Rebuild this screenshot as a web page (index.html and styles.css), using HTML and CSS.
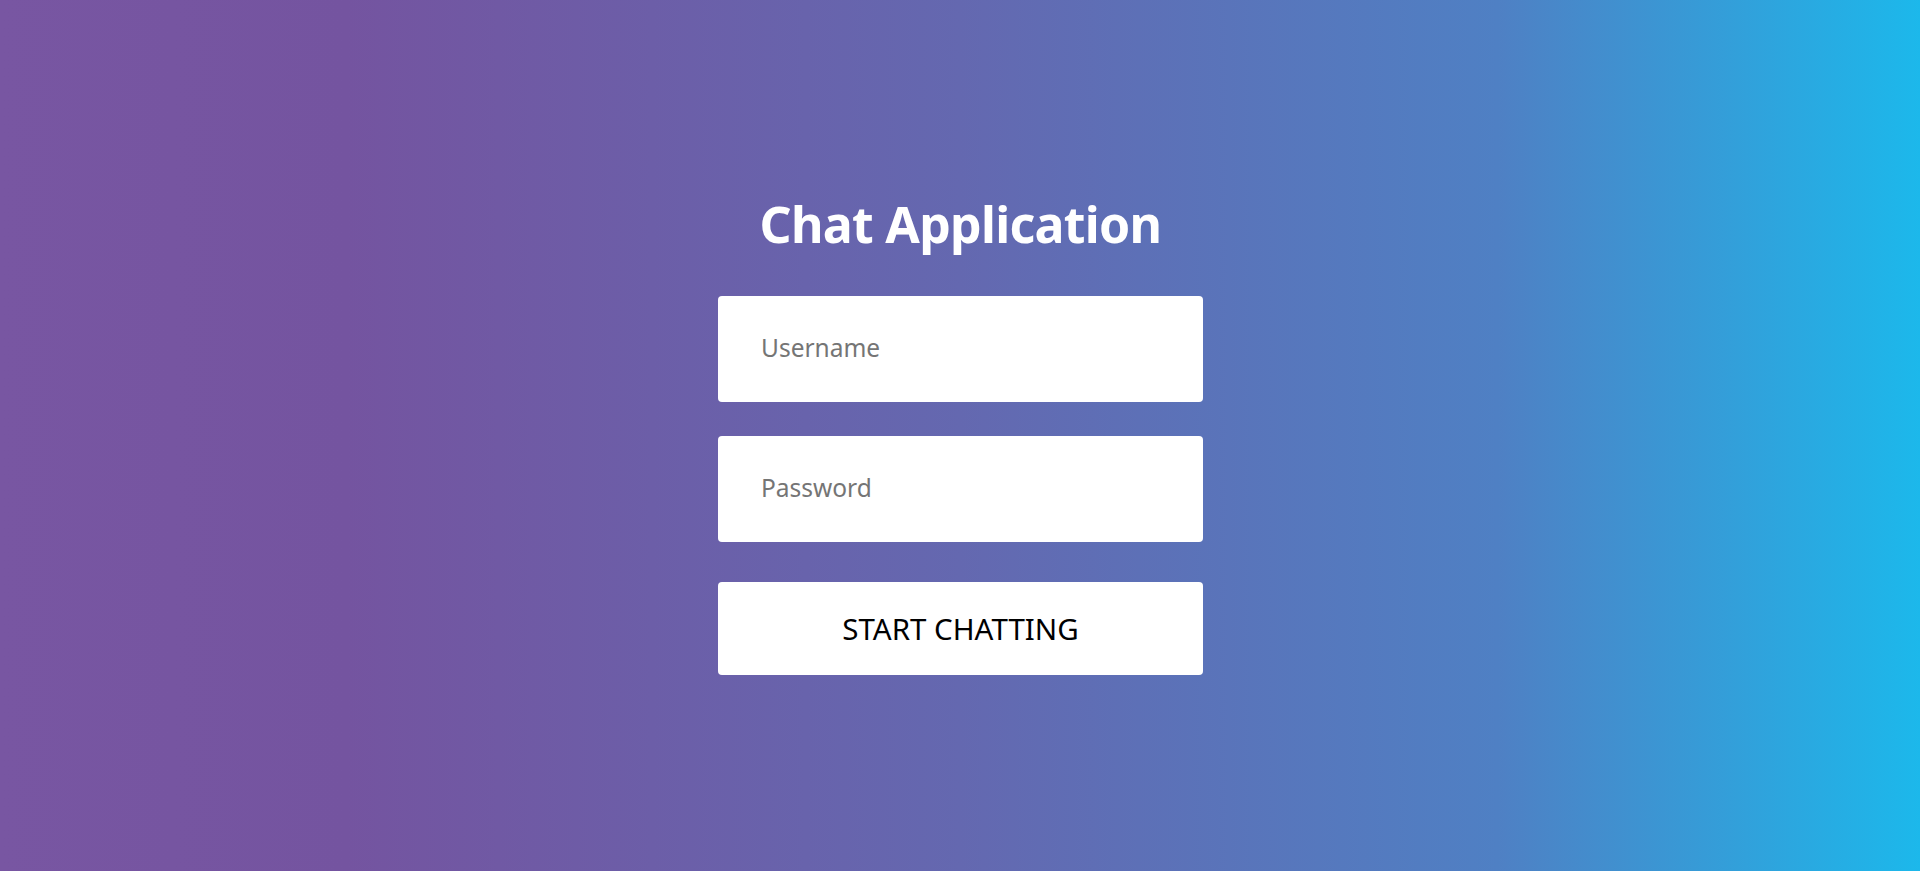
FILE: index.html
```html
<!DOCTYPE html>
<html lang="en">
<head>
<meta charset="utf-8">
<title>Chat Application</title>
<link rel="stylesheet" href="styles.css">
</head>
<body>
<main class="page">
  <form class="login">
    <h1 class="title">Chat Application</h1>
    <input class="field" type="text" placeholder="Username">
    <input class="field field-second" type="password" placeholder="Password">
    <button class="start" type="button">START CHATTING</button>
  </form>
</main>
</body>
</html>
```
FILE: styles.css
```css
html, body {
  margin: 0;
  height: 100%;
}
body {
  background: linear-gradient(to right, #7856a2 0%, #7454a0 18%, #6468b0 50%, #4f80c4 78%, #1cb8eb 100%);
  font-family: "Noto Sans", "Open Sans", sans-serif;
}
.page {
  display: flex;
  justify-content: center;
  padding-top: 192px;
  padding-left: 1px;
}
.login {
  width: 485px;
  display: flex;
  flex-direction: column;
}
.title {
  margin: 0 0 40px;
  font-size: 50px;
  line-height: 64px;
  letter-spacing: -0.7px;
  font-weight: 700;
  color: #fff;
  text-align: center;
}
.field {
  box-sizing: border-box;
  height: 106px;
  border: 0;
  border-radius: 4px;
  background: #fff;
  padding: 0 0 4px 43px;
  font-family: inherit;
  font-size: 24.5px;
  color: #333;
  outline: none;
}
.field::placeholder {
  color: #757575;
}
.field-second {
  margin-top: 34px;
}
.start {
  margin-top: 40px;
  height: 93px;
  border: 0;
  border-radius: 4px;
  background: #fff;
  font-family: inherit;
  font-size: 29.5px;
  color: #000;
  cursor: pointer;
}
```
